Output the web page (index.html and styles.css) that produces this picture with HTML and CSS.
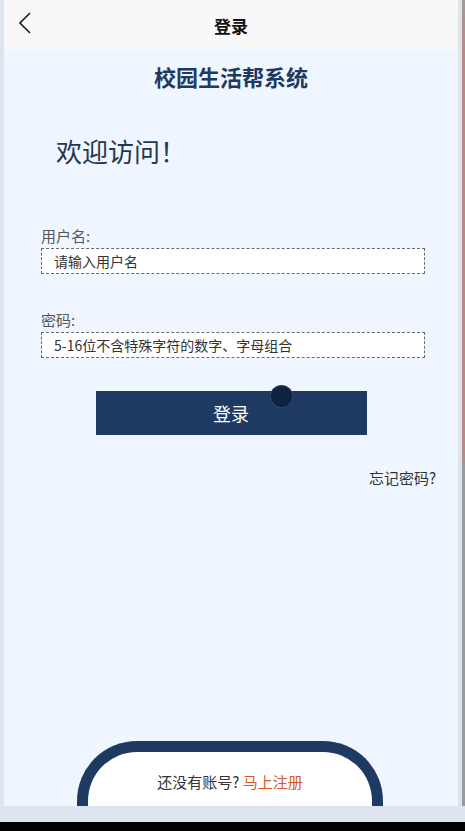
FILE: index.html
```html
<!DOCTYPE html>
<html lang="zh-CN">
<head>
    <meta charset="UTF-8">
    <meta name="viewport" content="width=device-width, initial-scale=1.0">
    <title>登录</title>
    <link rel="stylesheet" href="styles.css">
</head>
<body>
    <div class="device">
        <div class="device-row">
            <div class="phone">
                <div class="topbar">
                    <span class="back">
                        <svg width="12" height="22" viewBox="0 0 12 22"><polyline points="11,1 1,11 11,21" fill="none" stroke="#222" stroke-width="1.6"/></svg>
                    </span>
                    <span class="topbar-title">登录</span>
                    <span></span>
                </div>

                <h1 class="app-title">校园生活帮系统</h1>
                <h2 class="welcome">欢迎访问！</h2>

                <form class="login-form">
                    <label class="field-label" for="username">用户名:</label>
                    <input class="field" id="username" type="text" placeholder="请输入用户名">

                    <label class="field-label pwd-label" for="password">密码:</label>
                    <input class="field" id="password" type="password" placeholder="5-16位不含特殊字符的数字、字母组合">

                    <button type="button" class="login-btn">登录<span class="touch"></span></button>
                </form>

                <div class="forgot">忘记密码?</div>

                <div class="register">
                    还没有账号? <a class="register-link">马上注册</a>
                </div>
            </div>
            <div class="edge"></div>
        </div>
        <div class="device-bottom"></div>
    </div>
</body>
</html>
```

FILE: styles.css
```css
* {
    box-sizing: border-box;
}

body {
    margin: 0;
    font-family: "Noto Sans CJK SC", "Noto Sans", sans-serif;
    background: #dde4ee;
}

.device {
    width: 465px;
    height: 831px;
    display: flex;
    flex-direction: column;
    background: #dde4ee;
}

.device-row {
    display: flex;
    height: 806px;
}

.phone {
    width: 454px;
    margin-left: 4px;
    height: 806px;
    overflow: hidden;
    background: #f0f6ff;
    display: flex;
    flex-direction: column;
}

.edge {
    width: 3px;
    margin-left: auto;
    background: linear-gradient(#a69894, #b88a80 8%, #b88a80 56%, #9a9a9c 58%);
}

.device-bottom {
    margin-top: auto;
    height: 9px;
    background: #000;
}

.topbar {
    height: 50px;
    background: #f8f8f9;
    display: grid;
    grid-template-columns: 44px 1fr 44px;
    align-items: center;
}
.back {
    padding-left: 15px;
    padding-bottom: 4px;
    display: flex;
}
.topbar-title {
    text-align: center;
    font-size: 17px;
    font-weight: bold;
    color: #111;
}

.app-title {
    margin: 12px 0 0;
    line-height: 28px;
    font-size: 22px;
    font-weight: bold;
    text-align: center;
    color: #1e3a5f;
}

.welcome {
    margin: 43px 0 0 52px;
    line-height: 36px;
    font-size: 26px;
    font-weight: normal;
    color: #263750;
}

.login-form {
    display: flex;
    flex-direction: column;
    padding: 0 33px 0 37px;
    margin-top: 57px;
}
.field-label {
    font-size: 15px;
    line-height: 20px;
    color: #555;
}
.pwd-label {
    margin-top: 36px;
}
.field {
    margin-top: 2px;
    height: 26px;
    border: 1px dashed #666b73;
    background: #fff;
    padding: 0 12px;
    font-family: inherit;
    font-size: 14px;
    outline: none;
}
.field::placeholder {
    color: #333;
}

.login-btn {
    position: relative;
    align-self: center;
    margin: 33px 4px 0 0;
    width: 271px;
    height: 44px;
    border: none;
    background: #1e3a62;
    color: #fff;
    font-family: inherit;
    font-size: 18px;
    cursor: pointer;
}
.touch {
    position: absolute;
    left: 174px;
    top: -6px;
    width: 23px;
    height: 23px;
    border-radius: 50%;
    background: radial-gradient(circle, #0f2240 62%, #5a6780 76%, #a6acb6 88%, rgba(170, 175, 185, 0) 100%);
}

.forgot {
    margin-top: 33px;
    padding-right: 22px;
    text-align: right;
    font-size: 15px;
    line-height: 20px;
    color: #333;
}

.register {
    margin: auto 0 -35px 73px;
    width: 306px;
    height: 100px;
    border: 11px solid #1e3a62;
    border-bottom: none;
    border-radius: 60px 60px 0 0;
    background: #fff;
    padding-top: 20px;
    text-align: center;
    font-size: 15px;
    line-height: 20px;
    color: #333;
}
.register-link {
    color: #d4572a;
    cursor: pointer;
}
```
